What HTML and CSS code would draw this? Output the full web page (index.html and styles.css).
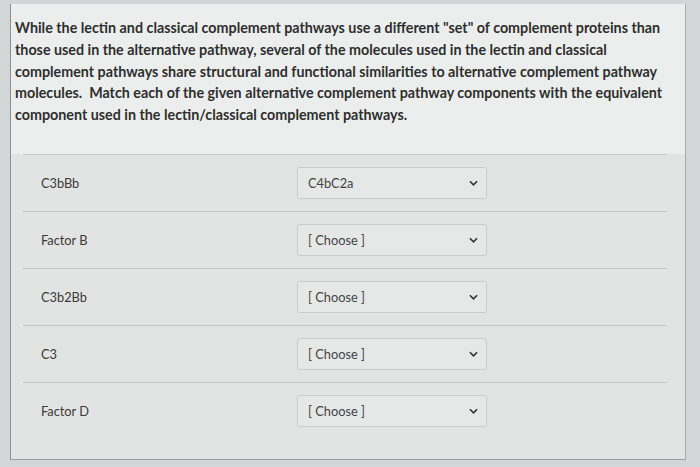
FILE: index.html
```html
<!DOCTYPE html>
<html>
<head>
<meta charset="utf-8">
<link rel="stylesheet" href="styles.css">
</head>
<body>
<div class="card">
  <div class="question">
    <p>While the lectin and classical complement pathways use a different "set" of complement proteins than those used in the alternative pathway, several of the molecules used in the lectin and classical complement pathways share structural and functional similarities to alternative complement pathway molecules.&nbsp; Match each of the given alternative complement pathway components with the equivalent component used in the lectin/classical complement pathways.</p>
  </div>
  <div class="answers">
    <div class="row">
      <div class="label">C3bBb</div>
      <div class="select"><span>C4bC2a</span><svg class="chev" viewBox="0 0 10 6" width="9" height="6"><path d="M1 1l4 4 4-4" fill="none" stroke="#333" stroke-width="1.8"/></svg></div>
    </div>
    <div class="row">
      <div class="label">Factor B</div>
      <div class="select"><span>[ Choose ]</span><svg class="chev" viewBox="0 0 10 6" width="9" height="6"><path d="M1 1l4 4 4-4" fill="none" stroke="#333" stroke-width="1.8"/></svg></div>
    </div>
    <div class="row">
      <div class="label">C3b2Bb</div>
      <div class="select"><span>[ Choose ]</span><svg class="chev" viewBox="0 0 10 6" width="9" height="6"><path d="M1 1l4 4 4-4" fill="none" stroke="#333" stroke-width="1.8"/></svg></div>
    </div>
    <div class="row">
      <div class="label">C3</div>
      <div class="select"><span>[ Choose ]</span><svg class="chev" viewBox="0 0 10 6" width="9" height="6"><path d="M1 1l4 4 4-4" fill="none" stroke="#333" stroke-width="1.8"/></svg></div>
    </div>
    <div class="row last">
      <div class="label">Factor D</div>
      <div class="select"><span>[ Choose ]</span><svg class="chev" viewBox="0 0 10 6" width="9" height="6"><path d="M1 1l4 4 4-4" fill="none" stroke="#333" stroke-width="1.8"/></svg></div>
    </div>
  </div>
</div>
</body>
</html>
```
FILE: styles.css
```css
html, body {
  margin: 0;
  padding: 0;
}
body {
  width: 700px;
  height: 467px;
  background: #d3d6d6;
  font-family: Lato, "Open Sans", sans-serif;
  color: #333;
  overflow: hidden;
}
.card {
  margin: 4px 0 0 10px;
  width: 676px;
  height: 456px;
  box-sizing: border-box;
  border-left: 1px solid #8e9191;
  border-right: 1px solid #a9acac;
  border-bottom: 1px solid #9a9d9d;
  background: #e2e4e3;
  display: flex;
  flex-direction: column;
}
.question {
  background: #eceeed;
  height: 150px;
  padding: 13px 8px 0 4px;
  box-sizing: border-box;
}
.question p {
  margin: 0;
  font-size: 14.3px;
  font-weight: bold;
  line-height: 21.8px;
  color: #2e2e2e;
}
.answers {
  border-top: 1px solid #c6c9c8;
  margin: 0 18px 0 12px;
  flex: 1;
  display: flex;
  flex-direction: column;
}
.row {
  height: 56px;
  border-bottom: 1px solid #c4c7c6;
  display: flex;
  align-items: center;
  padding-left: 18px;
}
.row.last {
  border-bottom: none;
}
.label {
  width: 256px;
  font-size: 12.8px;
  color: #3a3a3a;
}
.select {
  width: 190px;
  height: 32px;
  box-sizing: border-box;
  border: 1px solid #c9cccb;
  border-radius: 3px;
  background: #e6e8e7;
  display: flex;
  align-items: center;
  justify-content: space-between;
  padding: 0 8px 0 10px;
  font-size: 12.8px;
  color: #444;
}
.chev {
  display: block;
}
```
